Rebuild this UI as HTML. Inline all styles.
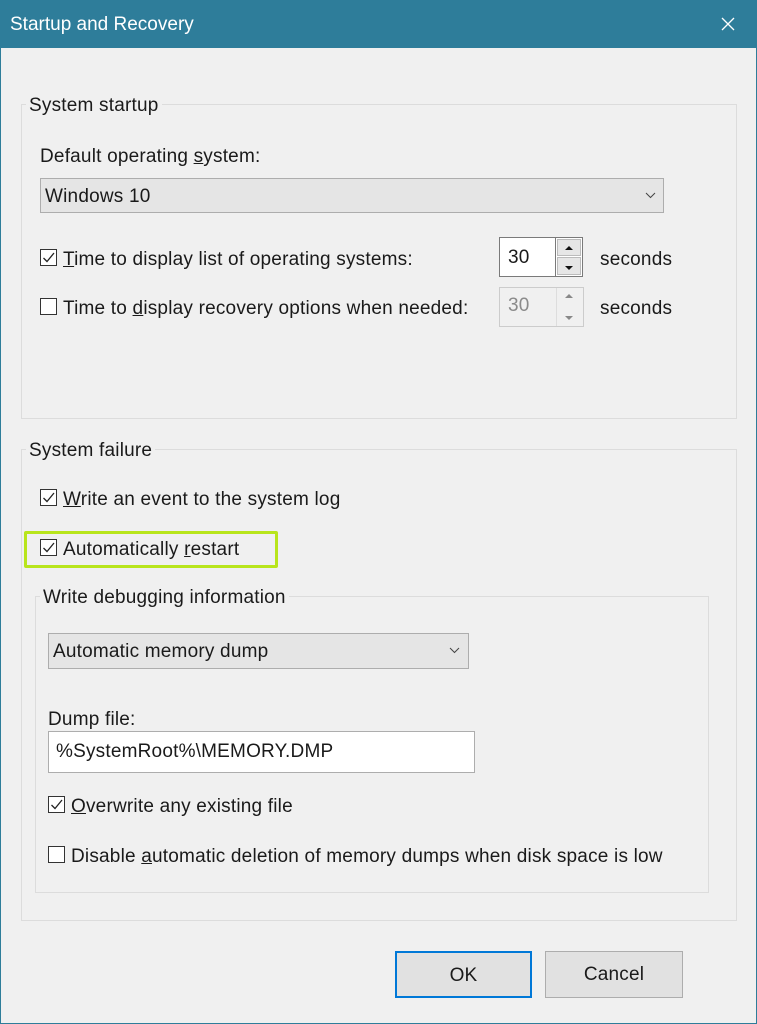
<!DOCTYPE html>
<html><head><meta charset="utf-8"><style>
*{box-sizing:border-box;margin:0;padding:0}
body{width:757px;height:1024px;background:#f0f0f0;position:relative;overflow:hidden;font-family:"Liberation Sans",sans-serif;color:#1a1a1a;font-size:19px;letter-spacing:0.2px}
.a{position:absolute}
.title{left:0;top:0;width:757px;height:48px;background:#2e7d9a;color:#fff;font-size:19px;letter-spacing:0}
.frame{left:0;top:48px;width:757px;height:976px;border:1px solid #2e7d9a;border-top:none}
.grp{border:1px solid #dcdcdc}
.lbl{background:#f0f0f0;padding:0 3px;line-height:22px;white-space:nowrap}
.t{line-height:22px;white-space:nowrap;margin-top:1px}
.cb{width:17px;height:17px;border:1px solid #333;background:#fff}
.cb svg{position:absolute;left:1px;top:1px}
.combo{background:#e5e5e5;border:1px solid #adadad;line-height:36px;padding-left:4px}
.btn{background:#e1e1e1;border:1px solid #adadad;text-align:center;line-height:46px}
u{text-decoration:underline}
</style></head><body>
<div class="a title"><span class="a" style="left:10px;top:14px">Startup and Recovery</span>
<svg class="a" style="left:721px;top:17px" width="14" height="14"><path d="M1 1L13 13M13 1L1 13" stroke="#fff" stroke-width="1.3"/></svg></div>
<div class="a frame"></div>

<div class="a grp" style="left:21px;top:104px;width:716px;height:315px"></div>
<div class="a lbl" style="left:26px;top:95px">System startup</div>
<div class="a t" style="left:40px;top:145px">Default operating <u>s</u>ystem:</div>
<div class="a combo" style="left:40px;top:178px;width:624px;height:35px">Windows 10
<svg class="a" style="left:604px;top:13px" width="11" height="7"><path d="M1 1L5.5 5.5L10 1" stroke="#444" fill="none"/></svg></div>

<div class="a cb" style="left:40px;top:249px"><svg width="13" height="13"><path d="M1.5 7L5 10.5L12 2" stroke="#222" stroke-width="1.3" fill="none"/></svg></div>
<div class="a t" style="left:63px;top:248px"><u>T</u>ime to display list of operating systems:</div>
<div class="a" style="left:499px;top:237px;width:57px;height:40px;background:#fff;border:1px solid #7a7a7a;border-right:none;padding:9px 0 0 8px;line-height:22px">30</div>
<div class="a" style="left:555px;top:237px;width:28px;height:40px;border:1px solid #7a7a7a;background:#fff"></div>
<div class="a" style="left:557px;top:239px;width:24px;height:17px;background:#e6e6e6;border:1px solid #bbb"></div>
<div class="a" style="left:557px;top:257px;width:24px;height:18px;background:#e6e6e6;border:1px solid #bbb"></div>
<svg class="a" style="left:564px;top:244px" width="10" height="28"><path d="M1 6L5 2L9 6Z M1 22L5 26L9 22Z" fill="#111"/></svg>
<div class="a t" style="left:600px;top:248px">seconds</div>

<div class="a cb" style="left:40px;top:298px"></div>
<div class="a t" style="left:63px;top:297px">Time to <u>d</u>isplay recovery options when needed:</div>
<div class="a" style="left:499px;top:287px;width:85px;height:40px;border:1px solid #ccc;padding:7px 0 0 8px;line-height:22px;color:#8a8a8a">30</div>
<div class="a" style="left:556px;top:288px;width:1px;height:38px;background:#ddd"></div>
<svg class="a" style="left:564px;top:292px" width="10" height="30"><path d="M1 6L5 2L9 6Z M1 24L5 28L9 24Z" fill="#888"/></svg>
<div class="a t" style="left:600px;top:297px">seconds</div>

<div class="a grp" style="left:21px;top:449px;width:716px;height:472px"></div>
<div class="a lbl" style="left:26px;top:440px">System failure</div>
<div class="a cb" style="left:40px;top:489px"><svg width="13" height="13"><path d="M1.5 7L5 10.5L12 2" stroke="#222" stroke-width="1.3" fill="none"/></svg></div>
<div class="a t" style="left:63px;top:488px"><u>W</u>rite an event to the system log</div>
<div class="a" style="left:24px;top:531px;width:254px;height:37px;border:3px solid #b8e51c;border-radius:2px"></div>
<div class="a cb" style="left:40px;top:539px"><svg width="13" height="13"><path d="M1.5 7L5 10.5L12 2" stroke="#222" stroke-width="1.3" fill="none"/></svg></div>
<div class="a t" style="left:63px;top:538px">Automatically <u>r</u>estart</div>

<div class="a grp" style="left:35px;top:596px;width:674px;height:297px"></div>
<div class="a lbl" style="left:40px;top:587px">Write debugging information</div>
<div class="a combo" style="left:48px;top:633px;width:421px;height:36px;line-height:36px">Automatic memory dump
<svg class="a" style="left:400px;top:13px" width="11" height="7"><path d="M1 1L5.5 5.5L10 1" stroke="#444" fill="none"/></svg></div>
<div class="a t" style="left:48px;top:708px">Dump file:</div>
<div class="a" style="left:48px;top:731px;width:427px;height:42px;background:#fff;border:1px solid #adadad;padding:9px 0 0 7px;line-height:22px">%SystemRoot%\MEMORY.DMP</div>
<div class="a cb" style="left:48px;top:796px"><svg width="13" height="13"><path d="M1.5 7L5 10.5L12 2" stroke="#222" stroke-width="1.3" fill="none"/></svg></div>
<div class="a t" style="left:71px;top:795px"><u>O</u>verwrite any existing file</div>
<div class="a cb" style="left:48px;top:846px"></div>
<div class="a t" style="left:71px;top:845px">Disable <u>a</u>utomatic deletion of memory dumps when disk space is low</div>

<div class="a btn" style="left:395px;top:951px;width:137px;height:47px;border:2px solid #0078d7">OK</div>
<div class="a btn" style="left:545px;top:951px;width:138px;height:47px">Cancel</div>
</body></html>
